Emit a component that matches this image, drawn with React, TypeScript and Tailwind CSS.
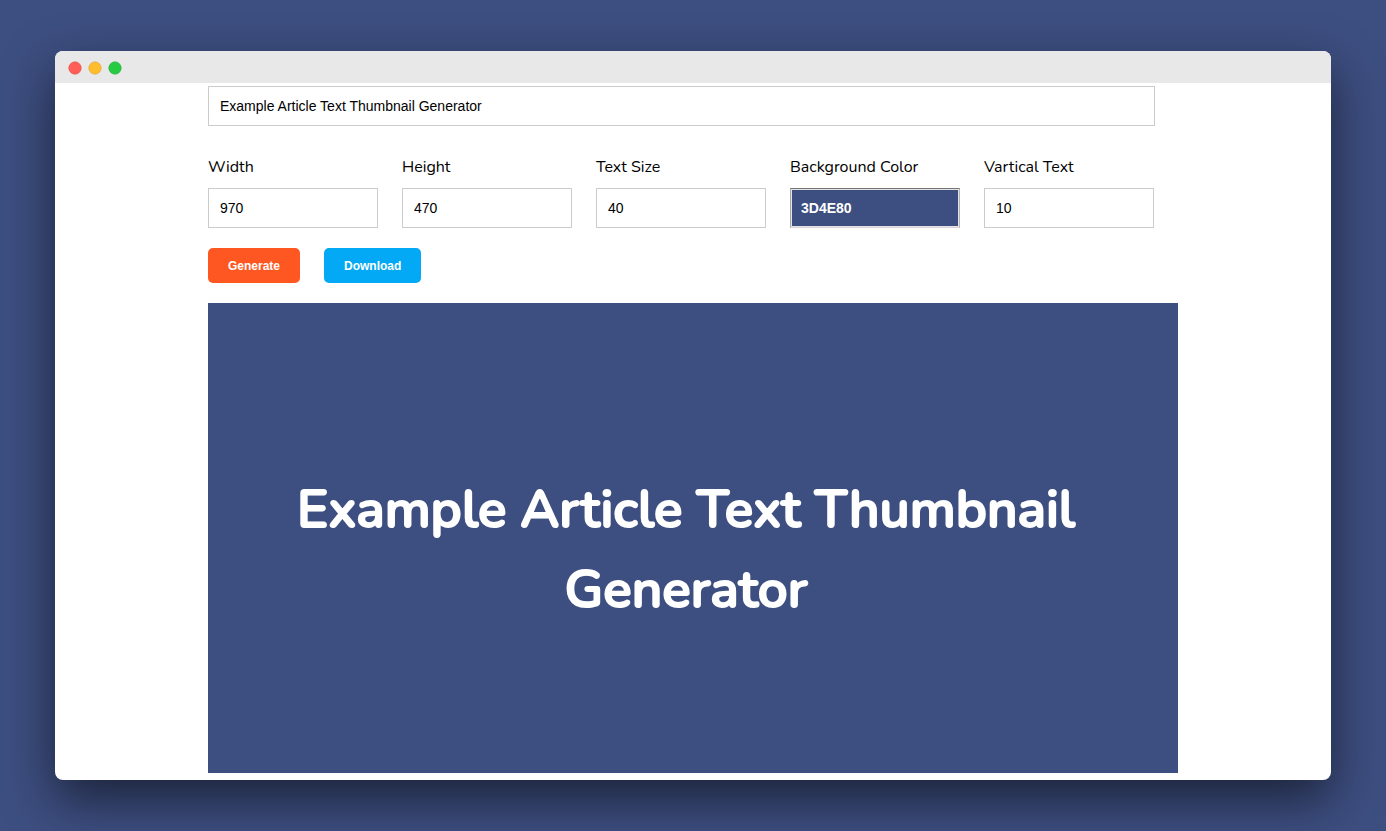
import { useState } from "react";

const inputClass =
  "h-10 w-full border border-[#cccccc] bg-white px-[11px] font-['Liberation_Sans',Arial,sans-serif] text-sm text-black outline-none";

const colorInputClass =
  "h-10 w-full border border-t-[#767676] border-r-[#b4b4b4] border-b-[#ddd2d8] border-l-[#a8a8a8] px-[10px] font-['Liberation_Sans',Arial,sans-serif] text-sm font-bold text-white outline-none ring-1 ring-inset ring-[#e4e4e4]";

const buttonClass =
  "h-[35px] rounded-[5px] px-5 font-['Liberation_Sans',Arial,sans-serif] text-xs font-bold text-white";

interface FieldProps {
  id: string;
  label: string;
  value: string;
  onChange: (value: string) => void;
  background?: string;
}

function Field({ id, label, value, onChange, background }: FieldProps) {
  return (
    <div className="flex flex-col gap-[9px]">
      <label htmlFor={id} className="text-base leading-6 text-black">
        {label}
      </label>
      <input
        id={id}
        type="text"
        value={value}
        onChange={(e) => onChange(e.target.value)}
        className={background ? colorInputClass : inputClass}
        style={background ? { backgroundColor: background } : undefined}
      />
    </div>
  );
}

function Light({ fill, stroke }: { fill: string; stroke: string }) {
  return (
    <svg className="size-[14px]" viewBox="0 0 14 14" aria-hidden="true">
      <circle cx="7" cy="7" r="6.1" fill={fill} stroke={stroke} strokeWidth="0.9" />
    </svg>
  );
}

function TitleBar() {
  return (
    <div className="flex h-8 items-center gap-[6px] bg-[#e8e8e8] px-[13px] pt-[2px]">
      <Light fill="#ff5f57" stroke="#ee4b45" />
      <Light fill="#ffbd2e" stroke="#e8a838" />
      <Light fill="#28ca42" stroke="#1fb43a" />
    </div>
  );
}

export default function App() {
  const [text, setText] = useState("Example Article Text Thumbnail Generator");
  const [width, setWidth] = useState("970");
  const [height, setHeight] = useState("470");
  const [size, setSize] = useState("40");
  const [color, setColor] = useState("3D4E80");
  const [vertical, setVertical] = useState("10");

  return (
    <div className="min-h-screen bg-[#3d4e80] px-[55px] py-[51px] font-['Nunito','Lato',sans-serif]">
      <main className="overflow-hidden rounded-lg bg-white shadow-[0_20px_50px_rgba(0,0,0,0.55)]">
        <TitleBar />
        <div className="mx-auto max-w-[970px] pt-[3px] pb-[7px]">
          <form className="pr-[23px]" onSubmit={(e) => e.preventDefault()}>
            <input
              type="text"
              aria-label="Text"
              value={text}
              onChange={(e) => setText(e.target.value)}
              className={inputClass}
            />
            <div className="mt-[29px] grid grid-cols-2 gap-6 pr-px md:grid-cols-5">
              <Field id="width" label="Width" value={width} onChange={setWidth} />
              <Field id="height" label="Height" value={height} onChange={setHeight} />
              <Field id="size" label="Text Size" value={size} onChange={setSize} />
              <Field
                id="color"
                label="Background Color"
                value={color}
                onChange={setColor}
                background={"#" + color}
              />
              <Field id="vertical" label="Vartical Text" value={vertical} onChange={setVertical} />
            </div>
            <div className="mt-5 flex gap-6">
              <button type="submit" className={`${buttonClass} bg-[#ff5722]`}>
                Generate
              </button>
              <button type="button" className={`${buttonClass} bg-[#03a9f4]`}>
                Download
              </button>
            </div>
          </form>
          <section className="mt-5 flex min-h-[470px] items-center justify-center bg-[#3d4e80] pt-6 pr-[76px] pl-[62px]">
            <h1 className="text-center text-[53px] leading-[80px] font-semibold text-white [-webkit-text-stroke:2px_white]">
              {text}
            </h1>
          </section>
        </div>
      </main>
    </div>
  );
}
